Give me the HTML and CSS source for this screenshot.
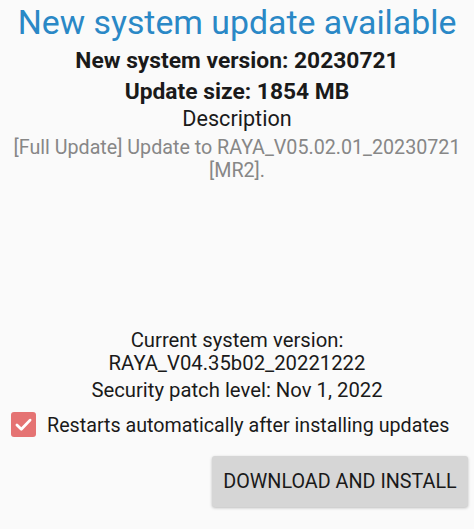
FILE: index.html
```html
<!DOCTYPE html>
<html>
<head>
<meta charset="utf-8">
<link rel="stylesheet" href="styles.css">
</head>
<body>
<div class="screen">
  <h1 class="title">New system update available</h1>
  <div class="info">
    <div class="new-version">New system version: 20230721</div>
    <div class="size">Update size: 1854 MB</div>
    <div class="desc-label">Description</div>
    <div class="desc">[Full Update] Update to RAYA_V05.02.01_20230721 [MR2].</div>
  </div>
  <div class="spacer"></div>
  <div class="current">
    <div class="cur-line">Current system version:<br>RAYA_V04.35b02_20221222</div>
    <div class="patch">Security patch level: Nov 1, 2022</div>
  </div>
  <label class="check-row">
    <span class="checkbox">
      <svg viewBox="0 0 24 24" width="21" height="21"><path d="M4.5 12.5 L9.5 17.5 L19.5 7" fill="none" stroke="#fff" stroke-width="3.2" stroke-linecap="round" stroke-linejoin="round"/></svg>
    </span>
    <span class="check-text">Restarts automatically after installing updates</span>
  </label>
  <div class="actions">
    <button class="btn">DOWNLOAD AND INSTALL</button>
  </div>
</div>
</body>
</html>
```
FILE: styles.css
```css
html, body {
  margin: 0;
  padding: 0;
  background: #fafafa;
}
.screen {
  height: 529px;
  display: flex;
  flex-direction: column;
  font-family: Roboto, "Noto Sans", sans-serif;
  color: #1a1a1a;
  text-align: center;
  box-sizing: border-box;
}
.title {
  margin: 0;
  font-weight: 400;
  font-size: 33.8px;
  line-height: 40px;
  color: #2a88c6;
  padding-top: 3px;
}
.info {
  display: flex;
  flex-direction: column;
}
.new-version, .size {
  font-weight: 700;
  font-size: 22.8px;
  line-height: 31px;
}
.new-version {
  margin-top: 2px;
}
.desc-label {
  margin-top: 1px;
  font-size: 21.6px;
  line-height: 22px;
}
.desc {
  margin-top: 6px;
  font-size: 19.7px;
  line-height: 23px;
  color: #878787;
  padding: 0 10px;
}
.spacer {
  flex: 1;
}
.current {
  font-size: 20.3px;
}
.cur-line {
  line-height: 23px;
}
.patch {
  margin-top: 4px;
  line-height: 23px;
}
.check-row {
  display: flex;
  align-items: center;
  gap: 11px;
  margin-top: 10px;
  padding: 0 11px;
  font-size: 19.7px;
  text-align: left;
}
.check-text {
  padding-top: 2px;
}
.checkbox {
  width: 25px;
  height: 25px;
  border-radius: 3px;
  background: #e57373;
  display: flex;
  align-items: center;
  justify-content: center;
  flex-shrink: 0;
}
.actions {
  display: flex;
  justify-content: flex-end;
  padding: 19px 6px 22px;
}
.btn {
  width: 256px;
  height: 51px;
  border: none;
  border-radius: 3px;
  background: #d6d6d6;
  box-shadow: 0 1px 3px rgba(0,0,0,0.25);
  font-family: Roboto, sans-serif;
  font-size: 19.75px;
  font-weight: 400;
  color: #1a1a1a;
  padding: 0;
}
```
